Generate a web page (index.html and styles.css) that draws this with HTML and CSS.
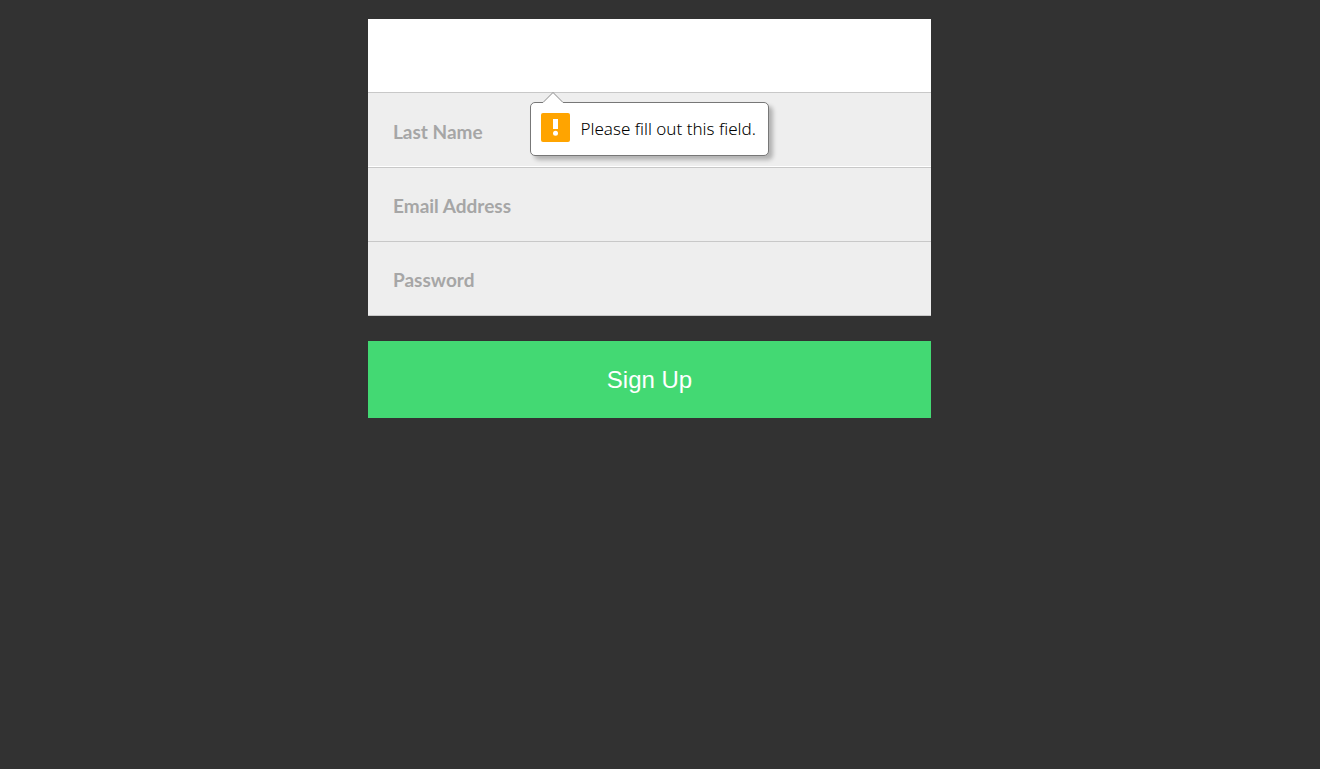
FILE: index.html
```html
<!DOCTYPE html>
<html lang="en">
<head>
    <meta charset="UTF-8">
    <meta name="viewport" content="width=device-width, initial-scale=1.0">
    <title>Sign Up</title>
    <link rel="stylesheet" href="styles.css">
</head>
<body>
    <form class="signup" novalidate>
        <div class="field active">
            <input type="text" name="first-name" aria-label="First Name" aria-describedby="first-name-error" required>
            <div class="tooltip" id="first-name-error" role="alert">
                <svg class="tooltip-arrow" width="22" height="11" viewBox="0 0 22 11" aria-hidden="true">
                    <path d="M1 11V10L11 0.5L21 10V11Z" fill="#fff"/>
                    <path d="M1 10.5L11 0.5L21 10.5" fill="none" stroke="#888"/>
                </svg>
                <svg class="tooltip-icon" width="29" height="29" viewBox="0 0 29 29" aria-hidden="true">
                    <rect width="29" height="29" rx="2" fill="#ffa400"/>
                    <path d="M12 6H17V16H12Z" fill="#fff"/>
                    <circle cx="14.5" cy="20.3" r="2.5" fill="#fff"/>
                </svg>
                <span>Please fill out this field.</span>
            </div>
        </div>
        <div class="field last-name">
            <input type="text" name="last-name" placeholder="Last Name" aria-label="Last Name" required>
        </div>
        <div class="field">
            <input type="email" name="email" placeholder="Email Address" aria-label="Email Address" required>
        </div>
        <div class="field">
            <input type="password" name="password" placeholder="Password" aria-label="Password" required>
        </div>
        <button type="submit">Sign Up</button>
    </form>
</body>
</html>
```
FILE: styles.css
```css
* {
    box-sizing: border-box;
}
body {
    margin: 0;
    padding: 19px 21px 19px 0;
    background: #323232;
    font-family: "Liberation Sans", Arial, sans-serif;
}
.signup {
    width: 100%;
    max-width: 563px;
    margin: 0 auto;
}
.field {
    position: relative;
    background: #eee;
    border-bottom: 1px solid #c8c8c8;
}
.active {
    background: #fff;
}
.last-name {
    padding-top: 1px;
    box-shadow: inset 0 -1px #fff;
}
.field input {
    display: block;
    width: 100%;
    height: 73px;
    padding: 2px 25px 0;
    border: none;
    outline: none;
    background: transparent;
    font-family: Lato, sans-serif;
    font-size: 19px;
    font-weight: 700;
    color: #323232;
}
.field input::placeholder {
    color: #a6a6a6;
    opacity: 1;
}
button {
    display: block;
    width: 100%;
    margin-top: 25px;
    padding: 24px;
    border: none;
    background: #43d973;
    color: #fff;
    font-family: inherit;
    font-size: 24px;
    line-height: 29px;
    cursor: pointer;
}

/* validation bubble */
.tooltip {
    position: absolute;
    top: calc(100% + 10px);
    left: 50%;
    z-index: 1;
    display: flex;
    width: 239px;
    margin-left: -120px;
    padding: 10px;
    gap: 11px;
    border: 1px solid #777;
    border-radius: 5px;
    background: #fff;
    box-shadow: 4px 4px 4px rgba(0, 0, 0, 0.25);
    color: #000;
    font-family: "Noto Sans", "Open Sans", sans-serif;
    font-size: 17px;
    font-weight: 300;
    line-height: 32px;
    white-space: nowrap;
}
.tooltip-arrow {
    position: absolute;
    top: -11px;
    left: 11px;
}
.tooltip-icon {
    flex: none;
}
```
